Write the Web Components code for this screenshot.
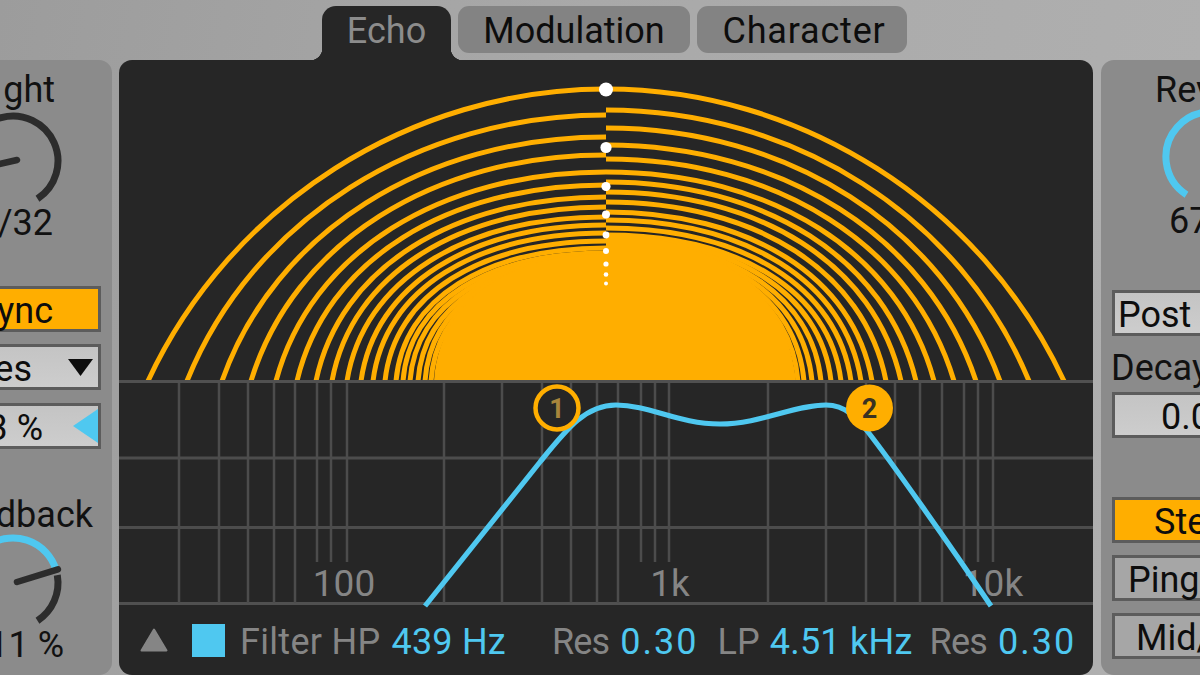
<!DOCTYPE html>
<html lang="en">
<head>
<meta charset="utf-8">
<title>Echo</title>
<style>
  html, body { margin: 0; height: 100%; overflow: hidden; }
  body {
    width: 1200px; height: 675px;
    background: linear-gradient(100deg, #9c9c9c 0%, #a9a9a9 45%, #b0b0b0 100%);
    font: 36px Roboto, "Liberation Sans", sans-serif;
    color: #111;
  }
</style>
</head>
<body>
<echo-device></echo-device>

<script>
const AMBER = "#ffae00";
const SKY = "#4fc8f0";

class TabButton extends HTMLElement {
  constructor() {
    super();
    this.attachShadow({ mode: "open" }).innerHTML = `
      <style>
        :host {
          display: flex; align-items: center; justify-content: center;
          box-sizing: border-box; white-space: nowrap;
          height: 47px; padding-top: 2px;
          background: #838383; border-radius: 11px;
          color: #0d0d0d; position: relative;
        }
        :host([active]) {
          height: 54px; padding: 2px 0 7px;
          background: #262626; color: #8c8c8c;
          border-radius: 14px 14px 0 0;
        }
        :host([active])::before, :host([active])::after {
          content: ""; position: absolute; bottom: 0; width: 12px; height: 12px;
        }
        :host([active])::before { left: -12px; background: radial-gradient(circle at 0 0, transparent 12px, #262626 12.5px); }
        :host([active])::after { right: -12px; background: radial-gradient(circle at 100% 0, transparent 12px, #262626 12.5px); }
      </style>
      <slot></slot>`;
  }
}

class SidePanel extends HTMLElement {
  constructor() {
    super();
    this.attachShadow({ mode: "open" }).innerHTML = `
      <style>
        :host {
          display: flex; flex: none; box-sizing: border-box;
          overflow: hidden; height: 615px; padding-top: 10px;
          background: #8b8b8b;
        }
        :host([side="left"]) {
          width: 112px; justify-content: flex-end; padding-right: 11px;
          border-radius: 0 13px 13px 0;
        }
        :host([side="right"]) {
          width: 99px; padding-left: 11px;
          border-radius: 13px 0 0 13px;
        }
        .col { flex: none; display: flex; flex-direction: column; }
        :host([side="left"]) .col { width: 101px; --txt-justify: flex-end; }
        :host([side="right"]) .col { width: 88px; --txt-justify: flex-start; }
      </style>
      <div class="col"><slot></slot></div>`;
  }
}

class DialKnob extends HTMLElement {
  connectedCallback() {
    const cx = +this.getAttribute("cx");
    const cy = +this.getAttribute("cy");
    const h = +this.getAttribute("h");
    const val = +this.getAttribute("angle");
    const r = 45, start = -147, end = 147;
    const pt = (a, rad = r) => {
      const t = a * Math.PI / 180;
      return [(cx + rad * Math.sin(t)).toFixed(1), (cy - rad * Math.cos(t)).toFixed(1)];
    };
    const arc = (a, b) => {
      const [x0, y0] = pt(a), [x1, y1] = pt(b);
      return `M${x0} ${y0}A${r} ${r} 0 ${b - a > 180 ? 1 : 0} 1 ${x1} ${y1}`;
    };
    const [tx, ty] = pt(val, r + 2);
    const noPointer = this.hasAttribute("no-pointer");
    this.attachShadow({ mode: "open" }).innerHTML = `
      <style>
        :host { display: block; white-space: nowrap; line-height: 40px; }
        .txt { height: 40px; display: flex; justify-content: var(--txt-justify, flex-start); }
        .lab { padding: 0 var(--lab-r, 0) 0 var(--lab-l, 0); }
        .val { padding: 0 var(--val-r, 0) 0 var(--val-l, 0); }
        svg { display: block; overflow: visible; margin-top: var(--knob-gap, 0); }
      </style>
      <div class="txt lab">${this.getAttribute("label")}</div>
      <svg width="100%" height="${h}" fill="none" stroke-width="7">
        <path d="${arc(start, val)}" stroke="${SKY}"/>
        ${noPointer ? "" : `<path d="${arc(val + 7, end)}" stroke="#2c2c2c"/>
        <line x1="${cx + 4}" y1="${cy - 1}" x2="${tx}" y2="${ty}" stroke="#2c2c2c" stroke-width="6.5" stroke-linecap="round"/>`}
      </svg>
      <div class="txt val">${this.getAttribute("value")}</div>`;
  }
}

class FieldButton extends HTMLElement {
  constructor() {
    super();
    this.attachShadow({ mode: "open" }).innerHTML = `
      <style>
        :host {
          display: flex; align-items: center; box-sizing: border-box;
          height: 46px; flex: none; white-space: nowrap;
          border: 3px solid #5c5c5c; line-height: 40px;
          background: var(--fill, #a6a6a6);
          justify-content: var(--justify, flex-start);
          padding: 3px var(--pad-r, 0) 0 var(--pad-l, 0);
          color: #0d0d0d;
        }
        :host([open-left]) { border-left: 0; }
        :host([open-right]) { border-right: 0; }
        ::slotted(svg) { flex: none; margin-top: -3px; }
      </style>
      <slot></slot>`;
  }
}

class ArcView extends HTMLElement {
  connectedCallback() {
    // ping-pong halves, [distance at the base, y of the crown]
    const left = [[458,89],[419,115],[384,137],[355,155],[330,172],[309,185],[290,197],[274,207],[259,217],[245,225],[233,233],[221,241],[210,248],[203,253],[196,256],[188,258],[181,259],[175,260]];
    const right = [[458,89],[423,110],[394,128],[370,145],[348,159],[328,172],[310,182],[295,192],[280,202],[266,212],[255,220],[245,228],[235,235],[225,238],[215,241],[206,243],[198,245],[192,247]];
    const mx = 487, base = 321;
    // outer repeats are circular, the inner ones get closer to an ellipse
    const handles = h => {
      const t = Math.min(1, Math.max(0, (h - 128) / 164));
      return [0.97 - 0.15 * t, 0.62 - 0.014 * t, 0.58 - 0.154 * t];
    };
    const half = ([d, top], dir) => {
      const h = 381 - top;
      const [k1, k2, k3] = handles(h);
      const x = v => (mx + dir * v).toFixed(1);
      const y = v => (base - v).toFixed(1);
      return `M${x(d * 1.02)} ${y(-h * 0.04)}L${x(d)} ${y(0)}C${x(d * k1)} ${y(h * k2)} ${x(d * k3)} ${y(h)} ${mx} ${y(h)}`;
    };
    const lines = [...left.map(a => half(a, -1)), ...right.map(a => half(a, 1))]
      .map(d => `<path d="${d}"/>`).join("");
    const dome = (dl, hl, dr, hr) => {
      const [a1, a2, a3] = handles(hl), [b1, b2, b3] = handles(hr);
      return `M${mx - dl} ${base}C${mx - dl * a1} ${base - hl * a2} ${mx - dl * a3} ${base - hl} ${mx} ${base - hl}` +
        `L${mx} ${base - hr}C${mx + dr * b3} ${base - hr} ${mx + dr * b1} ${base - hr * b2} ${mx + dr} ${base}Z`;
    };
    const dots = [[89.5, 7], [147.5, 5.6], [186.5, 4.6], [214.5, 4], [235, 3.4], [251, 3], [264, 2.6], [274.5, 2.3], [283.5, 2]]
      .map(([y, r]) => `<circle cx="${mx}" cy="${y - 60}" r="${r}"/>`).join("");
    this.attachShadow({ mode: "open" }).innerHTML = `
      <style>
        :host { display: block; flex: none; height: 321px; }
        svg { display: block; }
      </style>
      <svg width="974" height="321">
        <g fill="none" stroke="${AMBER}" stroke-width="5">${lines}</g>
        <path d="${dome(172, 127, 190, 146)}" fill="${AMBER}"/>
        <g fill="#fff">${dots}</g>
      </svg>`;
  }
}

class FilterGraph extends HTMLElement {
  connectedCallback() {
    const ox = 119, oy = 383;
    const full = [179, 219, 248, 274, 295, 444, 502, 542, 571, 597, 618, 768, 826, 866, 895, 920, 942];
    const short = [317, 331, 347, 641, 655, 669, 964, 978, 993];
    const v = (x, y2) => `<line x1="${x - ox}" x2="${x - ox}" y1="0" y2="${y2 - oy}"/>`;
    const grid = full.map(x => v(x, 603)).join("") + short.map(x => v(x, 562)).join("");
    const p = ([x, y]) => `${x - ox} ${y - oy}`;
    const d = `M${p([425, 606])}L${p([540, 462])}` +
      `C${p([566, 430])} ${p([585, 405])} ${p([616, 405])}` +
      `C${p([650, 405])} ${p([678, 424])} ${p([720, 424])}` +
      `C${p([760, 424])} ${p([795, 405])} ${p([826, 405])}` +
      `C${p([846, 405])} ${p([858, 419])} ${p([868, 432])}` +
      `C${p([890, 460])} ${p([950, 545])} ${p([991, 606])}`;
    this.attachShadow({ mode: "open" }).innerHTML = `
      <style>
        :host { display: block; flex: none; height: 219px; border-top: 3px solid #505050; border-bottom: 3px solid #505050; margin-top: -1px; }
        svg { display: block; overflow: visible; }
        text { font: 37px Roboto, "Liberation Sans", sans-serif; fill: #858585; text-anchor: middle; }
        .num { font-size: 27px; font-weight: 700; }
      </style>
      <svg width="974" height="219">
        <g stroke="#4c4c4c" stroke-width="2.5">
          ${grid}
          <line x1="0" x2="974" y1="75" y2="75" stroke-width="3"/>
          <line x1="0" x2="974" y1="144.5" y2="144.5" stroke-width="3"/>
        </g>
        <text x="225" y="213">100</text>
        <text x="551" y="213">1k</text>
        <text x="874" y="213">10k</text>
        <path d="${d}" fill="none" stroke="${SKY}" stroke-width="5.2"/>
        <circle cx="438" cy="25" r="21.5" fill="#262626" stroke="${AMBER}" stroke-width="4.5"/>
        <text class="num" x="438" y="35" style="fill:#a8863c">1</text>
        <circle cx="750.5" cy="25" r="23.5" fill="${AMBER}"/>
        <text class="num" x="750.5" y="35" style="fill:#3a3222">2</text>
      </svg>`;
  }
}

class FilterFooter extends HTMLElement {
  constructor() {
    super();
    this.attachShadow({ mode: "open" }).innerHTML = `
      <style>
        :host {
          display: flex; flex: 1; align-items: center; box-sizing: border-box;
          padding: 4px 0 0 21px; white-space: nowrap; color: #858585;
        }
        b { font-weight: 400; color: ${SKY}; }
        .tri { margin: -4px 24px 0 0; }
        .sq { width: 33px; height: 33px; background: ${SKY}; margin: -4px 15px 0 0; }
        .res { letter-spacing: -0.8px; }
        .num { letter-spacing: 2px; margin-left: 11px; }
      </style>
      <svg class="tri" width="28" height="24" viewBox="0 0 28 24"><path d="M14 1.5 26.5 22.5H1.5Z" fill="#858585" stroke="#858585" stroke-width="2" stroke-linejoin="round"/></svg>
      <div class="sq"></div>
      <span style="letter-spacing:.3px">Filter HP</span><b style="margin-left:11px;letter-spacing:.2px">439 Hz</b>
      <span class="res" style="margin-left:46px">Res</span><b class="num">0.30</b>
      <span style="margin-left:19px">LP</span><b style="margin-left:10px;letter-spacing:.25px">4.51 kHz</b>
      <span class="res" style="margin-left:17px">Res</span><b class="num">0.30</b>`;
  }
}

class EchoDisplay extends HTMLElement {
  constructor() {
    super();
    this.attachShadow({ mode: "open" }).innerHTML = `
      <style>
        :host {
          display: flex; flex-direction: column; flex: none;
          width: 974px; height: 615px; background: #262626;
          border-radius: 13px; overflow: hidden;
        }
      </style>
      <arc-view></arc-view>
      <filter-graph></filter-graph>
      <filter-footer></filter-footer>`;
  }
}

class EchoDevice extends HTMLElement {
  constructor() {
    super();
    const down = `<svg width="25" height="17" viewBox="0 0 25 17" style="margin-left:36px"><path d="M0 0H25L12.5 17Z" fill="#0d0d0d"/></svg>`;
    const back = `<svg width="25" height="34" viewBox="0 0 25 34" style="margin-left:30px"><path d="M25 0V34L0 17Z" fill="${SKY}"/></svg>`;
    this.attachShadow({ mode: "open" }).innerHTML = `
      <style>
        :host { display: block; width: 1200px; height: 675px; overflow: hidden; }
        .tabs { display: flex; gap: 7px; height: 60px; box-sizing: border-box; padding: 6px 0 0 322px; }
        .body { display: flex; gap: 7px; }
        .light { --fill: linear-gradient(#c4c4c4, #cdcdcd); }
        .amber { --fill: ${AMBER}; }
        .end { --justify: flex-end; }
        .cap { height: 40px; line-height: 40px; margin: 12px 0 4px -1px; }
      </style>
      <div class="tabs">
        <tab-button active style="width:129px">Echo</tab-button>
        <tab-button style="width:232px">Modulation</tab-button>
        <tab-button style="width:210px;padding-left:4px;letter-spacing:.8px">Character</tab-button>
      </div>
      <div class="body">
        <side-panel side="left">
          <dial-knob label="ght" value="/32" cx="13" cy="51" h="93" angle="-103"
            style="--lab-r:46px;--val-r:48px"></dial-knob>
          <field-button open-left class="amber end" style="margin-top:43px;--pad-r:45px">ync</field-button>
          <field-button open-left class="light end" style="margin-top:12px;--pad-r:5px">es${down}</field-button>
          <field-button open-left class="light end" style="margin-top:13px">3 %${back}</field-button>
          <dial-knob label="dback" value="11 %" cx="13" cy="54" h="96" angle="73"
            style="margin-top:46px;--lab-r:8px;--val-r:37px;--knob-gap:-6px"></dial-knob>
        </side-panel>
        <echo-display></echo-display>
        <side-panel side="right" style="margin-left:1px">
          <dial-knob label="Rev" value="67" cx="99" cy="47" h="91" angle="50" no-pointer
            style="--lab-l:43px;--val-l:57px"></dial-knob>
          <field-button open-right class="light" style="margin-top:49px;--pad-l:3px">Post</field-button>
          <div class="cap">Decay</div>
          <field-button open-right class="light" style="--pad-l:46px">0.0</field-button>
          <field-button open-right class="amber" style="margin-top:59px;--pad-l:39px">Ste</field-button>
          <field-button open-right style="margin-top:12px;--pad-l:13px">Ping</field-button>
          <field-button open-right style="margin-top:12px;--pad-l:21px">Mid/</field-button>
        </side-panel>
      </div>`;
  }
}

customElements.define("tab-button", TabButton);
customElements.define("side-panel", SidePanel);
customElements.define("dial-knob", DialKnob);
customElements.define("field-button", FieldButton);
customElements.define("arc-view", ArcView);
customElements.define("filter-graph", FilterGraph);
customElements.define("filter-footer", FilterFooter);
customElements.define("echo-display", EchoDisplay);
customElements.define("echo-device", EchoDevice);
</script>
</body>
</html>
